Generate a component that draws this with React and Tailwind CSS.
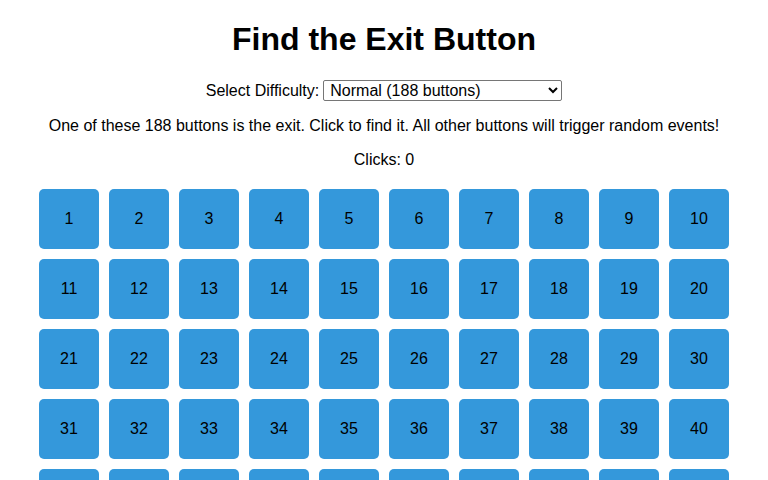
import React, { useState } from "react";

export default function App() {
  const [clicks, setClicks] = useState(0);
  const total = 188;
  const buttons = Array.from({ length: total }, (_, i) => i + 1);
  return (
    <div className="bg-white text-black text-center text-base" style={{ fontFamily: '"Liberation Sans", Arial, sans-serif' }}>
      <h1 className="text-[32px] font-bold leading-[37px] pt-[21px] mb-[22px]">Find the Exit Button</h1>
      <div className="flex items-center justify-center h-[21px] leading-[18px]">
        <label htmlFor="difficulty">Select Difficulty:</label>
        <select
          id="difficulty"
          defaultValue="normal"
          className="ml-[4px] w-[239px] h-[21px] border border-[#767676] rounded-[2px] px-[2px] text-base leading-[18px] bg-white text-black"
        >
          <option value="easy">Easy (50 buttons)</option>
          <option value="normal">Normal (188 buttons)</option>
          <option value="hard">Hard (500 buttons)</option>
        </select>
      </div>
      <p className="mt-[16px] leading-[18px]">
        One of these 188 buttons is the exit. Click to find it. All other buttons will trigger random events!
      </p>
      <p className="mt-[16px] leading-[18px]">Clicks: {clicks}</p>
      <div className="grid grid-cols-10 gap-[10px] w-[690px] mx-auto mt-[20px] pb-[20px]">
        {buttons.map((n) => (
          <button
            key={n}
            onClick={() => setClicks((c) => c + 1)}
            className="w-[60px] h-[60px] bg-[#3498db] rounded-[5px] text-base text-black flex items-center justify-center"
          >
            {n}
          </button>
        ))}
      </div>
    </div>
  );
}
